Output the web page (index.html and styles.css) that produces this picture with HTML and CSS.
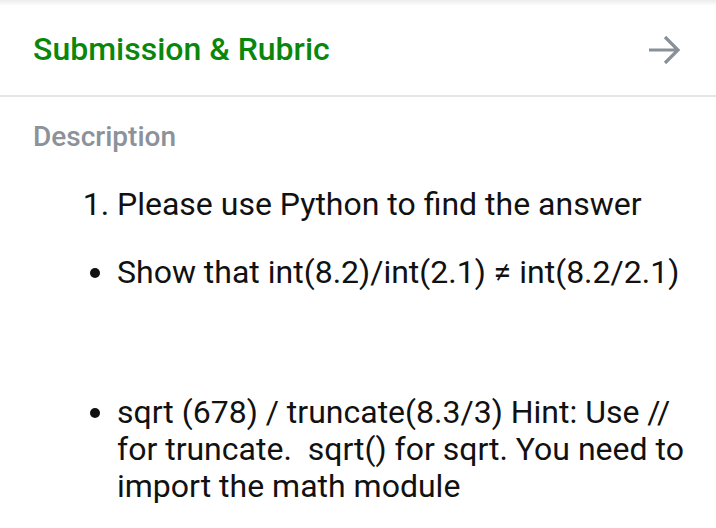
FILE: index.html
```html
<!DOCTYPE html>
<html>
<head>
<meta charset="utf-8">
<link rel="stylesheet" href="styles.css">
</head>
<body>
<div class="topshade"></div>
<header class="header">
  <h1 class="title">Submission &amp; Rubric</h1>
  <svg class="arrow" width="36" height="36" viewBox="0 0 36 36" aria-hidden="true">
    <path d="M3 18 H31 M19 5 L32 18 L19 31" fill="none" stroke="#8a9098" stroke-width="3.2"/>
  </svg>
</header>
<section class="desc">
  <h2 class="label">Description</h2>
  <ol class="olist">
    <li>Please use Python to find the answer</li>
  </ol>
  <ul class="ulist">
    <li>Show that int(8.2)/int(2.1) ≠ int(8.2/2.1)</li>
  </ul>
  <ul class="ulist second">
    <li>sqrt (678) / truncate(8.3/3) Hint: Use // for truncate.&nbsp; sqrt() for sqrt. You need to import the math module</li>
  </ul>
</section>
</body>
</html>
```
FILE: styles.css
```css
html, body {
  margin: 0;
  padding: 0;
  background: #ffffff;
  font-family: Roboto, "Noto Sans", sans-serif;
  color: #111111;
}
.topshade {
  height: 6px;
  background: linear-gradient(#ececec, #ffffff);
}
.header {
  display: flex;
  align-items: center;
  justify-content: space-between;
  height: 85px;
  padding: 0 34px 4px 33px;
  border-bottom: 2px solid #e6e6e6;
}
.title {
  margin: 0;
  font-size: 32px;
  font-weight: 500;
  color: #0a870a;
}
.arrow {
  display: block;
  margin-top: 2px;
}
.desc {
  padding: 24px 33px 0 33px;
}
.label {
  margin: 0;
  font-size: 28px;
  font-weight: 500;
  color: #8b9299;
  line-height: 32px;
}
.olist {
  margin: 33px 0 0 0;
  padding-left: 84px;
  font-size: 32px;
  line-height: 36px;
}
.ulist {
  margin: 32px 0 0 0;
  padding-left: 84px;
  font-size: 32px;
  line-height: 36px;
}
.ulist.second {
  margin-top: 104px;
  margin-right: -4px;
  line-height: 37px;
}
```
